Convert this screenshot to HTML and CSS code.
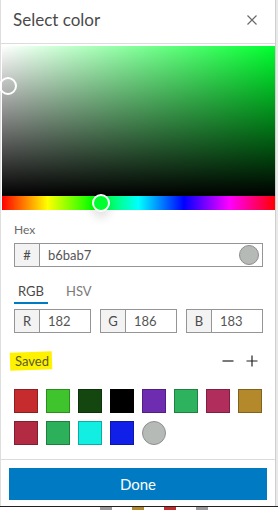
FILE: index.html
```html
<!DOCTYPE html>
<html>
<head>
    <title>Select color</title>
    <link rel="stylesheet" href="styles.css">
</head>
<body>
    <div class="panel">
        <div class="panel-header">
            <span class="panel-title">Select color</span>
            <button class="close-btn" aria-label="Close">
                <svg width="12" height="12" viewBox="0 0 12 12"><path d="M1.5 1.5l9 9M10.5 1.5l-9 9" stroke="#6a6a6a" stroke-width="1.2" fill="none"/></svg>
            </button>
        </div>

        <div class="picker">
            <div class="color-field">
                <span class="field-thumb"></span>
            </div>
            <div class="hue-bar">
                <span class="hue-thumb"></span>
            </div>
        </div>

        <div class="controls">
            <label class="label-text">Hex</label>
            <div class="input-group hex-group">
                <span class="prefix">#</span>
                <span class="value">b6bab7</span>
                <span class="preview"></span>
            </div>

            <div class="tabs">
                <span class="tab active">RGB</span>
                <span class="tab">HSV</span>
            </div>
            <div class="channels">
                <div class="input-group">
                    <span class="prefix">R</span>
                    <span class="value">182</span>
                </div>
                <div class="input-group">
                    <span class="prefix">G</span>
                    <span class="value">186</span>
                </div>
                <div class="input-group">
                    <span class="prefix">B</span>
                    <span class="value">183</span>
                </div>
            </div>

            <div class="saved-header">
                <span class="saved-title">Saved</span>
                <div class="saved-actions">
                    <svg width="12" height="12" viewBox="0 0 12 12"><path d="M0.5 6h11" stroke="#222" stroke-width="1.2"/></svg>
                    <svg width="12" height="12" viewBox="0 0 12 12"><path d="M0.5 6h11M6 0.5v11" stroke="#222" stroke-width="1.2"/></svg>
                </div>
            </div>
            <div class="swatches">
                <span class="swatch" style="background:#c62b2e;border-color:#8e1f21"></span>
                <span class="swatch" style="background:#3fc42d;border-color:#2d8c20"></span>
                <span class="swatch" style="background:#14460f;border-color:#0e320b"></span>
                <span class="swatch" style="background:#000000;border-color:#000000"></span>
                <span class="swatch" style="background:#6e2db1;border-color:#4f207f"></span>
                <span class="swatch" style="background:#2db35d;border-color:#208043"></span>
                <span class="swatch" style="background:#b02d5c;border-color:#7e2042"></span>
                <span class="swatch" style="background:#b3892c;border-color:#80621f"></span>
                <span class="swatch" style="background:#b22b43;border-color:#801f30"></span>
                <span class="swatch" style="background:#2db05a;border-color:#207e40"></span>
                <span class="swatch" style="background:#12efe2;border-color:#0daba2"></span>
                <span class="swatch" style="background:#1120e8;border-color:#0c17a6"></span>
                <span class="swatch round" style="background:#b6bab7"></span>
            </div>
        </div>

        <div class="panel-footer">
            <button class="done-btn">Done</button>
        </div>
    </div>
    <div class="under">
        <span class="chip" style="background:#999"></span>
        <span class="chip" style="background:#b3892c"></span>
        <span class="chip" style="background:#c62b2e"></span>
        <span class="chip" style="background:#999"></span>
    </div>
</body>
</html>
```

FILE: styles.css
```css
body {
    margin: 0;
    background-color: #e9e9e9;
    font-family: "Lato", "Open Sans", sans-serif;
    color: #323232;
}
.panel {
    width: 274px;
    height: 506px;
    background-color: #fff;
    border-left: 1px solid #dedede;
    border-right: 1px solid #cfcfcf;
    display: flex;
    flex-direction: column;
}
.panel-header {
    height: 43px;
    border-bottom: 1px solid #dcdcdc;
    display: flex;
    align-items: center;
    justify-content: space-between;
    padding: 0 17px 0 12px;
}
.panel-title {
    font-size: 17px;
    color: #4a4a4a;
    margin-top: -4px;
}
.close-btn {
    background: none;
    border: none;
    padding: 0;
    display: flex;
    margin-top: -4px;
}
.picker {
    padding: 2px 0 0 1px;
}
.color-field {
    position: relative;
    height: 150px;
    background:
        linear-gradient(to top, #000, rgba(0, 0, 0, 0)),
        linear-gradient(to right, #fff, #00ff2e);
}
.field-thumb {
    position: absolute;
    left: -3px;
    top: 31px;
    width: 14px;
    height: 14px;
    border: 2px solid #fff;
    border-radius: 50%;
}
.hue-bar {
    position: relative;
    height: 14px;
    background: linear-gradient(to right, #f00, #ff0, #0f0, #0ff, #00f, #f0f, #f00);
}
.hue-thumb {
    position: absolute;
    left: 90px;
    top: -2px;
    width: 14px;
    height: 14px;
    border: 2px solid #fff;
    border-radius: 50%;
    background-color: #00ff2e;
    box-shadow: 0 6px 10px rgba(0, 0, 0, 0.12);
}
.controls {
    padding: 0 12px 0 13px;
    flex: 1;
}
.label-text {
    display: block;
    font-size: 12px;
    line-height: 16px;
    color: #6a6a6a;
    margin-top: 12px;
    margin-bottom: 5px;
}
.input-group {
    display: flex;
    align-items: center;
    height: 22px;
    border: 1px solid #959595;
    font-size: 13px;
}
.prefix {
    width: 24px;
    height: 100%;
    background-color: #f3f3f3;
    border-right: 1px solid #959595;
    display: flex;
    align-items: center;
    justify-content: center;
    color: #4a4a4a;
}
.value {
    flex: 1;
    padding-left: 8px;
    color: #555;
}
.preview {
    width: 18px;
    height: 18px;
    border-radius: 50%;
    border: 1px solid #8e8e8e;
    background-color: #b6bab7;
    margin-right: 3px;
}
.tabs {
    display: flex;
    gap: 14px;
    margin-top: 12px;
    height: 25px;
}
.tab {
    font-size: 13px;
    color: #7a7a7a;
    padding: 4px 4px 0 4px;
    box-sizing: border-box;
    height: 25px;
}
.tab.active {
    color: #4a4a4a;
    border-bottom: 2px solid #007ac2;
}
.channels {
    display: flex;
    gap: 9px;
    margin-top: 5px;
}
.channels .input-group {
    flex: 1;
}
.saved-header {
    display: flex;
    justify-content: space-between;
    align-items: center;
    margin-top: 20px;
    height: 16px;
}
.saved-title {
    position: relative;
    z-index: 0;
    font-size: 13px;
    color: #5a5a2a;
    padding-left: 1px;
}
.saved-title::before {
    content: "";
    position: absolute;
    left: -4px;
    right: -3px;
    top: -1px;
    bottom: -1px;
    background-color: #fff200;
    transform: rotate(-2deg);
    z-index: -1;
}
.saved-actions {
    display: flex;
    gap: 12px;
    padding-right: 5px;
}
.swatches {
    display: grid;
    grid-template-columns: repeat(8, 24px);
    gap: 8px;
    margin-top: 20px;
}
.swatch {
    width: 24px;
    height: 24px;
    box-sizing: border-box;
    border: 1px solid;
}
.swatch.round {
    border-radius: 50%;
    border-color: #8e8e8e;
}
.panel-footer {
    border-top: 1px solid #dcdcdc;
    padding: 8px 8px 6px 8px;
}
.done-btn {
    width: 100%;
    height: 32px;
    border: none;
    background-color: #007ac2;
    color: #fff;
    font-family: "Lato", sans-serif;
    font-size: 15px;
}
.under {
    height: 4px;
    display: flex;
    gap: 20px;
    padding-left: 100px;
    background-color: #fff;
    border-top: 1px solid #222;
}
.chip {
    width: 12px;
    height: 4px;
}
```
